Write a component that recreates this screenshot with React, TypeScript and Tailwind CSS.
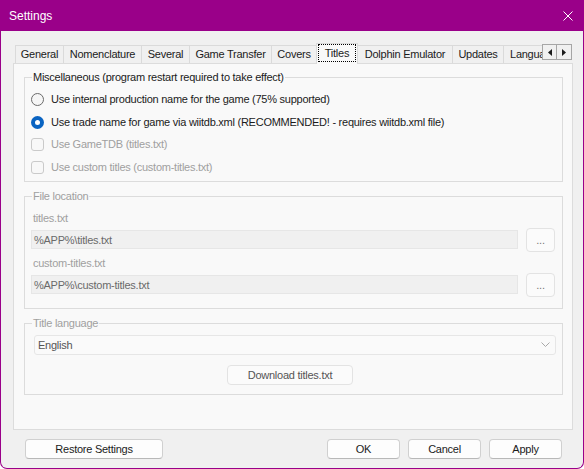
import React from "react";

const tabs = [
  { label: "General", w: "w-[48px]" },
  { label: "Nomenclature", w: "w-[78px]" },
  { label: "Several", w: "w-[48px]" },
  { label: "Game Transfer", w: "w-[82px]" },
  { label: "Covers", w: "w-[45px]" },
  { label: "Titles", w: "w-[42px]", active: true },
  { label: "Dolphin Emulator", w: "w-[94px]" },
  { label: "Updates", w: "w-[51px]" },
  { label: "Language", w: "w-[60px]" },
];

function Radio({ checked }: { checked?: boolean }) {
  if (checked) {
    return (
      <span className="w-[13px] h-[13px] rounded-full bg-[#0a64c2] flex items-center justify-center shrink-0">
        <span className="w-[5px] h-[5px] rounded-full bg-white" />
      </span>
    );
  }
  return <span className="w-[13px] h-[13px] rounded-full border border-[#6b6b6b] bg-[#f6f6f6] shrink-0" />;
}

function Checkbox() {
  return <span className="w-[13px] h-[13px] rounded-[3px] border border-[#cacaca] bg-[#f8f8f8] shrink-0" />;
}

function PathRow({ value }: { value: string }) {
  return (
    <div className="flex items-center h-[24px] mt-[2px]">
      <div className="flex-1 h-[19px] bg-[#f0f0f0] border border-[#e6e6e6] text-[#6a6a6a] pl-[2px] flex items-center">
        {value}
      </div>
      <button className="ml-[8px] mr-[1px] w-[29px] h-[24px] rounded-[4px] border border-[#e3e3e3] bg-[#fbfbfb] text-[#777] flex items-end justify-center pb-[5px] leading-none">
        ...
      </button>
    </div>
  );
}

function DialogButton({ label, w }: { label: string; w: string }) {
  return (
    <button
      className={`${w} h-[20px] rounded-[4px] border border-[#d0d0d0] border-b-[#b8b8b8] bg-[#fdfdfd] text-[#1b1b1b] flex items-center justify-center`}
    >
      {label}
    </button>
  );
}

export default function App() {
  return (
    <div className="w-[584px] h-[469px] bg-[#f0f0f0] border-x border-b border-[#9a0089] rounded-b-[7px] overflow-hidden flex flex-col font-['Liberation_Sans',Arial,sans-serif] text-[11px] tracking-[-0.25px] text-[#1b1b1b]">
      {/* title bar */}
      <div className="h-[31px] bg-[#9a0089] -mx-px flex items-center justify-between pl-[9px] pr-[11px] shrink-0">
        <span className="text-white text-[12px] tracking-normal">Settings</span>
        <svg width="10" height="10" viewBox="0 0 10 10">
          <path d="M0.5 0.5 L9.5 9.5 M9.5 0.5 L0.5 9.5" stroke="white" strokeWidth="1" />
        </svg>
      </div>

      <div className="pl-[12px] pr-[10px] pt-[12px] flex flex-col">
        {/* tab strip */}
        <div className="h-[21px] -mb-px relative z-10 flex items-end">
          <div className="flex-1 min-w-0 overflow-hidden flex items-end pl-[2px] h-full">
            {tabs.map((t, i) => {
              const afterActive = i > 0 && tabs[i - 1].active;
              if (t.active) {
                return (
                  <div
                    key={t.label}
                    className={`${t.w} shrink-0 h-[21px] bg-[#f9f9f9] border-x border-t border-[#dadada] px-[1px] pb-[2px]`}
                  >
                    <span className="h-[18px] w-full border border-dotted border-black flex items-center justify-center">
                      {t.label}
                    </span>
                  </div>
                );
              }
              return (
                <div
                  key={t.label}
                  className={`${t.w} shrink-0 h-[18px] mb-[1px] bg-[#f0f0f0] border-t border-[#dadada] ${
                    afterActive ? "" : "border-l"
                  } flex items-center justify-center whitespace-nowrap`}
                >
                  {t.label}
                </div>
              );
            })}
          </div>
          <div className="flex h-[16px] mb-[4px] mr-[1px] shrink-0">
            <div className="w-[15px] h-full border border-[#a6a6a6] bg-[#f0f0f0] flex items-center justify-center">
              <svg width="4" height="7" viewBox="0 0 4 7">
                <polygon points="4,0 0,3.5 4,7" fill="#1b1b1b" />
              </svg>
            </div>
            <div className="w-[15px] h-full border border-l-0 border-[#a6a6a6] bg-[#f0f0f0] flex items-center justify-center">
              <svg width="4" height="7" viewBox="0 0 4 7">
                <polygon points="0,0 4,3.5 0,7" fill="#1b1b1b" />
              </svg>
            </div>
          </div>
        </div>

        {/* tab page */}
        <div className="h-[367px] border border-[#dcdcdc] bg-[#f9f9f9] pt-[6px] flex flex-col">
          <fieldset className="ml-[10px] mr-[9px] border border-[#dcdcdc] px-[6px] pb-[2px]">
            <legend className="ml-[1px] px-[1px] leading-[15px]">
              Miscellaneous (program restart required to take effect)
            </legend>
            <div className="pt-[3px] flex flex-col">
              <div className="h-[22.7px] flex items-center gap-[7px]">
                <Radio />
                <span>Use internal production name for the game (75% supported)</span>
              </div>
              <div className="h-[22.7px] flex items-center gap-[7px]">
                <Radio checked />
                <span>Use trade name for game via wiitdb.xml (RECOMMENDED! - requires wiitdb.xml file)</span>
              </div>
              <div className="h-[22.7px] flex items-center gap-[7px] text-[#a0a0a0]">
                <Checkbox />
                <span>Use GameTDB (titles.txt)</span>
              </div>
              <div className="h-[22.7px] flex items-center gap-[7px] text-[#a0a0a0]">
                <Checkbox />
                <span>Use custom titles (custom-titles.txt)</span>
              </div>
            </div>
          </fieldset>

          <fieldset className="mt-[7px] ml-[10px] mr-[9px] border border-[#dcdcdc] px-[6px] pb-[11px]">
            <legend className="ml-[1px] px-[1px] leading-[15px] text-[#a0a0a0]">File location</legend>
            <div className="pt-[7px] flex flex-col">
              <div className="h-[15px] leading-[15px] ml-[2px] text-[#a0a0a0]">titles.txt</div>
              <PathRow value="%APP%\titles.txt" />
              <div className="h-[15px] leading-[15px] ml-[2px] mt-[4px] text-[#a0a0a0]">custom-titles.txt</div>
              <PathRow value="%APP%\custom-titles.txt" />
            </div>
          </fieldset>

          <fieldset className="mt-[7px] ml-[10px] mr-[9px] border border-[#dcdcdc] px-[6px] pb-[9px]">
            <legend className="ml-[1px] px-[1px] leading-[15px] text-[#a0a0a0]">Title language</legend>
            <div className="pt-[4px] flex flex-col">
              <div className="ml-[3px] h-[20px] rounded-[3px] border border-[#e6e6e6] bg-[#fafafa] flex items-center justify-between pl-[3px] pr-[5px] text-[#555]">
                <span>English</span>
                <svg width="9" height="5" viewBox="0 0 9 5">
                  <polyline points="0.5,0.5 4.5,4.5 8.5,0.5" fill="none" stroke="#a8a8a8" strokeWidth="1" />
                </svg>
              </div>
              <button className="mt-[10px] ml-[196px] w-[126px] h-[20px] rounded-[4px] border border-[#e3e3e3] bg-[#fbfbfb] text-[#555] flex items-center justify-center">
                Download titles.txt
              </button>
            </div>
          </fieldset>
        </div>

        {/* dialog buttons */}
        <div className="mt-[9px] flex items-center">
          <div className="ml-[12px]">
            <DialogButton label="Restore Settings" w="w-[138px]" />
          </div>
          <div className="ml-auto mr-[11px] flex gap-[8px]">
            <DialogButton label="OK" w="w-[73px]" />
            <DialogButton label="Cancel" w="w-[73px]" />
            <DialogButton label="Apply" w="w-[73px]" />
          </div>
        </div>
      </div>
    </div>
  );
}
